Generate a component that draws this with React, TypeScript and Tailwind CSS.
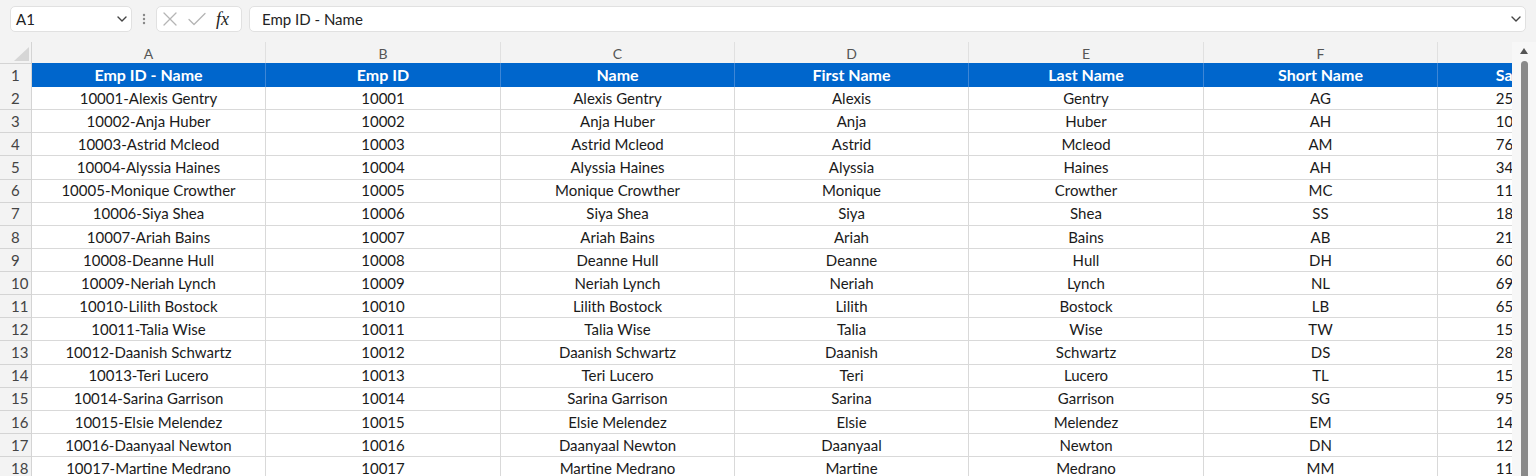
import React from 'react';

type Emp = { id: number; first: string; last: string; salary: string };

const employees: Emp[] = [
  { id: 10001, first: 'Alexis', last: 'Gentry', salary: '25400' },
  { id: 10002, first: 'Anja', last: 'Huber', salary: '10800' },
  { id: 10003, first: 'Astrid', last: 'Mcleod', salary: '76200' },
  { id: 10004, first: 'Alyssia', last: 'Haines', salary: '34500' },
  { id: 10005, first: 'Monique', last: 'Crowther', salary: '11900' },
  { id: 10006, first: 'Siya', last: 'Shea', salary: '18300' },
  { id: 10007, first: 'Ariah', last: 'Bains', salary: '21700' },
  { id: 10008, first: 'Deanne', last: 'Hull', salary: '60100' },
  { id: 10009, first: 'Neriah', last: 'Lynch', salary: '69400' },
  { id: 10010, first: 'Lilith', last: 'Bostock', salary: '65900' },
  { id: 10011, first: 'Talia', last: 'Wise', salary: '15800' },
  { id: 10012, first: 'Daanish', last: 'Schwartz', salary: '28600' },
  { id: 10013, first: 'Teri', last: 'Lucero', salary: '15200' },
  { id: 10014, first: 'Sarina', last: 'Garrison', salary: '95300' },
  { id: 10015, first: 'Elsie', last: 'Melendez', salary: '14700' },
  { id: 10016, first: 'Daanyaal', last: 'Newton', salary: '12500' },
  { id: 10017, first: 'Martine', last: 'Medrano', salary: '11600' },
];

const columns = [
  { letter: 'A', title: 'Emp ID - Name', w: 'w-[234px]' },
  { letter: 'B', title: 'Emp ID', w: 'w-[235px]' },
  { letter: 'C', title: 'Name', w: 'w-[234px]' },
  { letter: 'D', title: 'First Name', w: 'w-[234px]' },
  { letter: 'E', title: 'Last Name', w: 'w-[235px]' },
  { letter: 'F', title: 'Short Name', w: 'w-[234px]' },
  { letter: 'G', title: 'Salary', w: 'w-[160px]' },
];

const rowValues = (e: Emp) => [
  `${e.id}-${e.first} ${e.last}`,
  String(e.id),
  `${e.first} ${e.last}`,
  e.first,
  e.last,
  e.first[0] + e.last[0],
  e.salary,
];

const Chevron = ({ className }: { className?: string }) => (
  <svg width="14" height="14" viewBox="0 0 14 14" className={className} fill="none">
    <path d="M3 5l4 4 4-4" stroke="#444" strokeWidth="1.4" strokeLinecap="round" strokeLinejoin="round" />
  </svg>
);

const FormulaBar = () => (
  <div className="flex items-start h-[42px] pt-[6px] pl-[10px] pr-[10px] gap-[6px]">
    <div className="flex items-center justify-between w-[122px] h-[26px] bg-white border border-[#e1e1e1] rounded-[5px] pl-[5px] pr-[2px]">
      <span className="text-[15px] text-[#222]">A1</span>
      <Chevron />
    </div>
    <svg width="12" height="26" viewBox="0 0 12 26">
      <circle cx="6" cy="9" r="1.2" fill="#888" />
      <circle cx="6" cy="13" r="1.2" fill="#888" />
      <circle cx="6" cy="17" r="1.2" fill="#888" />
    </svg>
    <div className="flex items-center gap-[9px] w-[86px] h-[26px] bg-white border border-[#e1e1e1] rounded-[5px] pl-[5px]">
      <svg width="16" height="16" viewBox="0 0 16 16" fill="none">
        <path d="M2 2l12 12M14 2L2 14" stroke="#b5b5b5" strokeWidth="1.3" strokeLinecap="round" />
      </svg>
      <svg width="20" height="16" viewBox="0 0 20 16" fill="none">
        <path d="M2 8.5l5 5L18 2.5" stroke="#b5b5b5" strokeWidth="1.3" strokeLinecap="round" strokeLinejoin="round" />
      </svg>
      <span className="text-[18px] italic text-[#222] font-['Liberation_Serif',serif] leading-none">fx</span>
    </div>
    <div className="flex-1 flex items-center justify-between h-[26px] bg-white border border-[#e1e1e1] rounded-[5px] pl-[12px] pr-[2px] ml-[1px]">
      <span className="text-[15px] text-[#222]">Emp ID - Name</span>
      <Chevron />
    </div>
  </div>
);

const HeaderRow = () => (
  <div className="flex h-[21px]">
    <div className="w-[32px] shrink-0 border-r border-[#d4d4d4] flex items-end justify-end">
      <svg width="20" height="17" viewBox="0 0 20 17">
        <polygon points="18,1 18,15 3,15" fill="#d6d6d6" />
      </svg>
    </div>
    {columns.map((c) => (
      <div
        key={c.letter}
        className={`${c.w} shrink-0 border-r border-[#e0e0e0] flex items-center justify-center text-[14px] text-[#555] pt-[1px]`}
      >
        {c.letter}
      </div>
    ))}
  </div>
);

export default function App() {
  return (
    <div className="w-[1536px] h-[476px] overflow-hidden bg-[#f3f3f3] font-['Lato',sans-serif]">
      <FormulaBar />
      <div className="flex">
        <div className="w-[1512px] overflow-hidden">
          <div className="w-[1700px]">
            <HeaderRow />
            <div className="flex h-[24px]">
              <div className="w-[32px] shrink-0 border-r border-t border-[#d4d4d4] pl-[11px] text-[15px] text-[#444] flex items-center">1</div>
              {columns.map((c) => (
                <div
                  key={c.letter}
                  className={`${c.w} shrink-0 bg-[#0066cc] border-r border-[#3d86d6] flex items-center justify-center text-[16px] font-bold text-white`}
                >
                  {c.title}
                </div>
              ))}
            </div>
            {employees.map((e, i) => (
              <div key={e.id} className="flex h-[23.125px]">
                <div className="w-[32px] shrink-0 border-r border-b border-[#d4d4d4] pl-[11px] text-[15px] text-[#444] flex items-center">
                  {i + 2}
                </div>
                {rowValues(e).map((v, j) => (
                  <div
                    key={j}
                    className={`${columns[j].w} shrink-0 bg-white border-r border-b border-[#d9d9d9] flex items-center justify-center text-[15px] text-[#1a1a1a]`}
                  >
                    {v}
                  </div>
                ))}
              </div>
            ))}
          </div>
        </div>
        <div className="w-[24px] shrink-0 flex flex-col items-center bg-[#f7f7f7]">
          <svg width="10" height="8" viewBox="0 0 10 8" className="mt-[5px]">
            <polygon points="5,1 9,7 1,7" fill="#555" />
          </svg>
          <div className="w-[7px] flex-1 mt-[6px] rounded-full bg-[#8a8a8a]" />
        </div>
      </div>
    </div>
  );
}
